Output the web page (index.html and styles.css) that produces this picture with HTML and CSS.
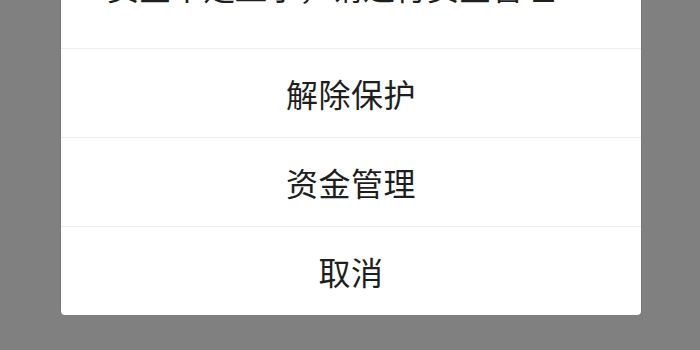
FILE: index.html
```html
<!DOCTYPE html>
<html lang="zh-CN">
<head>
<meta charset="utf-8">
<link rel="stylesheet" href="styles.css">
</head>
<body>
<div class="dialog">
  <div class="message">资金不足显示，请进行资金管理</div>
  <div class="action">解除保护</div>
  <div class="action">资金管理</div>
  <div class="action">取消</div>
</div>
</body>
</html>
```
FILE: styles.css
```css
html, body {
  margin: 0;
  padding: 0;
}
body {
  width: 700px;
  height: 350px;
  overflow: hidden;
  background: #808080;
  font-family: "Noto Sans CJK SC", "Noto Sans", sans-serif;
  color: #1e1e1e;
}
.dialog {
  width: 580px;
  margin: -38px 0 0 61px;
  background: #ffffff;
  border-radius: 0 0 4px 4px;
  box-shadow: -1px 0 0 rgba(0,0,0,0.08), 1px 0 0 rgba(0,0,0,0.08);
}
.message {
  font-size: 32px;
  line-height: 48px;
  padding: 0 0 38px 46px;
  white-space: nowrap;
}
.action {
  height: 88px;
  border-top: 1px solid #ececec;
  display: flex;
  align-items: center;
  justify-content: center;
  font-size: 32px;
  letter-spacing: 0.5px;
}
```
